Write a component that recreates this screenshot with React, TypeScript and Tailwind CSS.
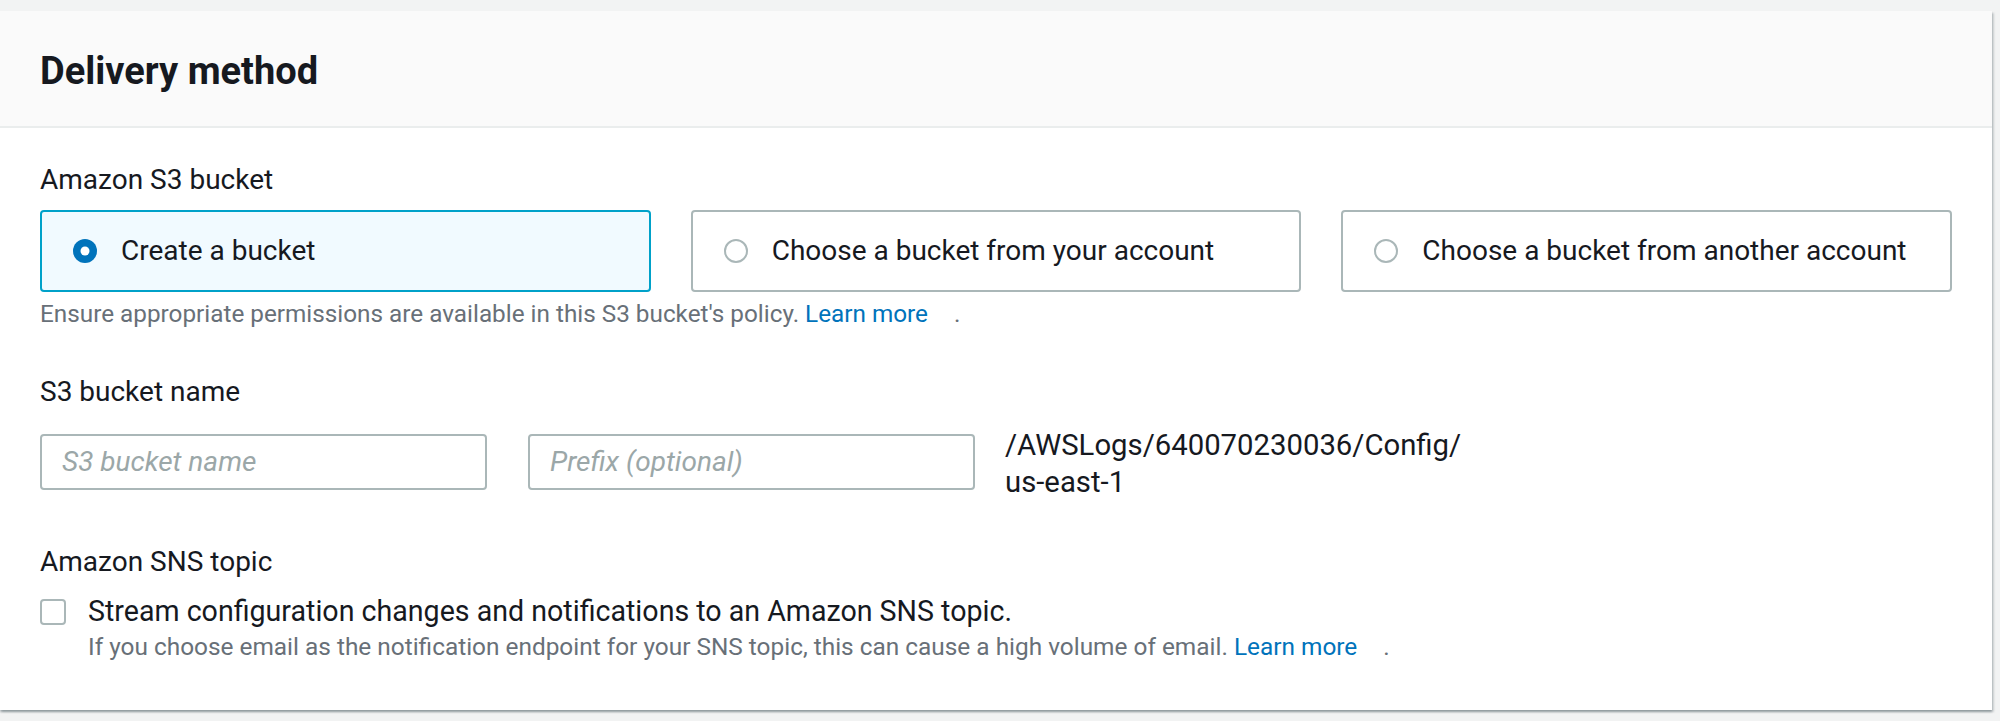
import React from "react";

const font = { fontFamily: "Roboto, 'Noto Sans', Arial, sans-serif" };

function Radio({ checked }: { checked: boolean }) {
  return (
    <svg width="24" height="24" viewBox="0 0 24 24" className="shrink-0">
      {checked ? (
        <>
          <circle cx="12" cy="12" r="12" fill="#0073bb" />
          <circle cx="12" cy="12" r="4.5" fill="#ffffff" />
        </>
      ) : (
        <circle cx="12" cy="12" r="11" fill="#ffffff" stroke="#aab7b8" strokeWidth="2" />
      )}
    </svg>
  );
}

function Tile({ label, checked }: { label: string; checked: boolean }) {
  return (
    <div
      className={
        checked
          ? "flex h-[82px] items-center gap-[24px] rounded-[4px] border-2 border-[#00a1c9] bg-[#f1faff] pl-[31px]"
          : "flex h-[82px] items-center gap-[24px] rounded-[4px] border-2 border-[#aab7b8] bg-white pl-[31px]"
      }
    >
      <Radio checked={checked} />
      <span className="text-[28px] leading-[40px] text-[#16191f]">{label}</span>
    </div>
  );
}

export default function App() {
  return (
    <div className="flex h-[721px] w-[2000px] flex-col bg-[#f2f3f3] pr-[8px] pt-[11px]" style={font}>
      <div className="flex flex-col bg-white shadow-[0_2px_2px_0_rgba(0,28,36,0.3),2px_2px_2px_0_rgba(0,28,36,0.15)]">
        <div className="flex h-[117px] items-center border-b-2 border-[#eaeded] bg-[#fafafa] px-[40px] pt-[4px]">
          <h2 className="text-[38px] font-bold leading-[44px] text-[#16191f]">Delivery method</h2>
        </div>
        <div className="flex flex-col px-[40px] pb-[47px] pt-[32px]">
          <div className="text-[28px] leading-[40px] text-[#16191f]">Amazon S3 bucket</div>
          <div className="mt-[10px] grid grid-cols-3 gap-[40px]">
            <Tile label="Create a bucket" checked />
            <Tile label="Choose a bucket from your account" checked={false} />
            <Tile label="Choose a bucket from another account" checked={false} />
          </div>
          <div className="mt-[6px] text-[24.3px] leading-[32px] text-[#687078]">
            Ensure appropriate permissions are available in this S3 bucket's policy.{" "}
            <span className="text-[#0073bb]">Learn more</span>
            <span className="ml-[26px]">.</span>
          </div>

          <div className="mt-[42px] text-[28px] leading-[40px] text-[#16191f]">S3 bucket name</div>
          <div className="mt-[15px] flex items-start">
            <div className="mt-[7px] flex h-[56px] w-[447px] items-center rounded-[4px] border-2 border-[#aab7b8] bg-white pl-[20px]">
              <span className="text-[28px] italic text-[#9ba7a8]">S3 bucket name</span>
            </div>
            <div className="ml-[41px] mt-[7px] flex h-[56px] w-[447px] items-center rounded-[4px] border-2 border-[#aab7b8] bg-white pl-[20px]">
              <span className="text-[28px] italic text-[#9ba7a8]">Prefix (optional)</span>
            </div>
            <div className="ml-[30px] text-[29.3px] leading-[37px] text-[#16191f]">
              <div>/AWSLogs/640070230036/Config/</div>
              <div>us-east-1</div>
            </div>
          </div>

          <div className="mt-[41px] text-[28px] leading-[40px] text-[#16191f]">Amazon SNS topic</div>
          <div className="mt-[9px] flex items-start gap-[22px]">
            <div className="mt-[8px] h-[26px] w-[26px] shrink-0 rounded-[4px] border-2 border-[#aab7b8] bg-white" />
            <div className="flex flex-col">
              <div className="text-[28.6px] leading-[40px] text-[#16191f]">
                Stream configuration changes and notifications to an Amazon SNS topic.
              </div>
              <div className="text-[24.4px] leading-[32px] text-[#687078]">
                If you choose email as the notification endpoint for your SNS topic, this can cause a high volume of
                email. <span className="text-[#0073bb]">Learn more</span>
                <span className="ml-[26px]">.</span>
              </div>
            </div>
          </div>
        </div>
      </div>
    </div>
  );
}
